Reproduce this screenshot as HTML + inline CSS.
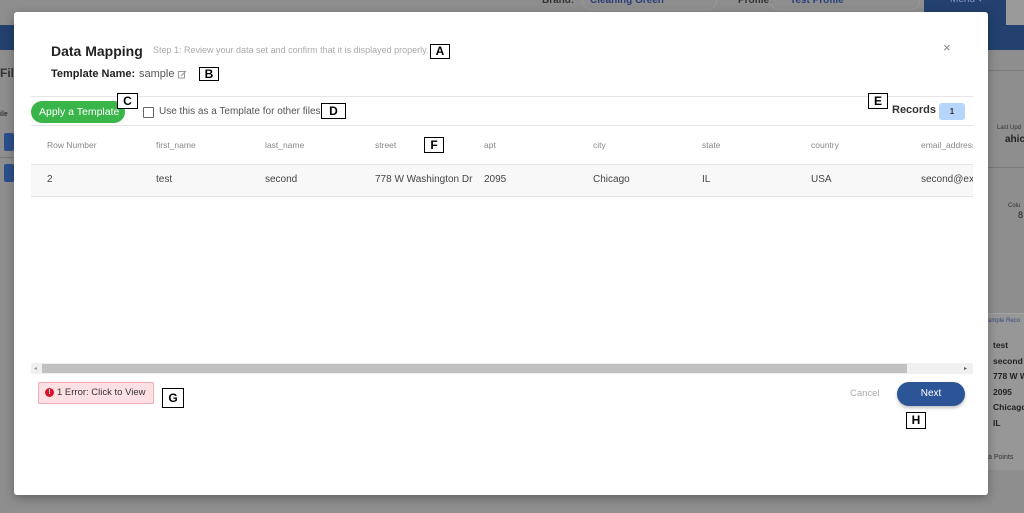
<!DOCTYPE html>
<html><head><style>
*{margin:0;padding:0;box-sizing:border-box}
body{width:1024px;height:513px;overflow:hidden;background:#8e8e8e;font-family:"Liberation Sans",Arial,sans-serif;position:relative}
.a{position:absolute;white-space:nowrap}
.box{position:absolute;border:1px solid #000;background:#fff;font:bold 12px "Liberation Sans",sans-serif;text-align:center;color:#000}
.th{position:absolute;top:140px;font-size:8.5px;color:#888}
.td{position:absolute;top:174px;font-size:10px;color:#444}
</style></head><body>
<div class="a" style="left:0;top:25px;width:14px;height:25px;background:#23406e"></div>
<div class="a" style="left:924px;top:0;width:100px;height:50px;background:#23406e"></div>
<div class="a" style="left:1006px;top:0;width:18px;height:25px;background:#9a9a9a"></div>
<div class="a" style="left:950px;top:-6px;font-size:10px;color:#8a9ac0">Menu ▾</div>
<div class="a" style="left:542px;top:-5px;font-size:10px;font-weight:bold;color:#333">Brand:</div>
<div class="a" style="left:582px;top:-8px;width:135px;height:18px;border:1px solid #999;border-radius:9px"></div>
<div class="a" style="left:590px;top:-5px;font-size:10px;color:#2c3f7a;font-weight:bold">Cleaning Green</div>
<div class="a" style="left:738px;top:-5px;font-size:10px;font-weight:bold;color:#333">Profile:</div>
<div class="a" style="left:770px;top:-8px;width:150px;height:18px;border:1px solid #999;border-radius:9px"></div>
<div class="a" style="left:790px;top:-5px;font-size:10px;color:#2c3f7a;font-weight:bold">Test Profile</div>
<div class="a" style="left:0;top:66px;font-size:12px;font-weight:bold;color:#333">File</div>
<div class="a" style="left:0;top:111px;font-size:7px;font-weight:bold;color:#333">ile</div>
<div class="a" style="left:4px;top:133px;width:10px;height:18px;background:#2c4f8c;border-radius:2px"></div>
<div class="a" style="left:4px;top:164px;width:10px;height:18px;background:#2c4f8c;border-radius:2px"></div>
<div class="a" style="left:0;top:157px;width:14px;height:1px;background:#7a7a7a"></div>
<div class="a" style="left:988px;top:70px;width:36px;height:1px;background:#7a7a7a"></div>
<div class="a" style="left:988px;top:167px;width:36px;height:1px;background:#7a7a7a"></div>
<div class="a" style="left:997px;top:125px;font-size:6px;color:#333">Last Upd</div>
<div class="a" style="left:1005px;top:134px;font-size:10px;font-weight:bold;color:#222">ahic</div>
<div class="a" style="left:1008px;top:203px;font-size:6px;color:#333">Colu</div>
<div class="a" style="left:1018px;top:210px;font-size:9px;color:#222">8</div>
<div class="a" style="left:988px;top:313px;width:36px;height:157px;background:#979797;border-top:1px solid #a5a5a5"></div>
<div class="a" style="left:988px;top:318px;font-size:6px;color:#3a4a7a">ample Reco</div>
<div class="a" style="left:993px;top:338px;font-size:8.5px;font-weight:bold;color:#222;line-height:15.6px">test<br>second<br>778 W W<br>2095<br>Chicago<br>IL</div>
<div class="a" style="left:988px;top:454px;font-size:7px;color:#333">a Points</div>
<div class="a" style="left:14px;top:12px;width:974px;height:483px;background:#fff;border-radius:3px;box-shadow:0 3px 10px rgba(0,0,0,.3)"></div>
<div class="a" style="left:51px;top:43px;font-size:14px;font-weight:bold;color:#222">Data Mapping</div>
<div class="a" style="left:153px;top:45px;font-size:9px;color:#aaa">Step 1: Review your data set and confirm that it is displayed properly.</div>
<div class="box" style="left:430px;top:44px;width:20px;height:15px;line-height:13px">A</div>
<div class="a" style="left:943px;top:40px;font-size:13px;color:#888">×</div>
<div class="a" style="left:51px;top:68px;font-size:11px;font-weight:bold;color:#222">Template Name:</div>
<div class="a" style="left:139px;top:68px;font-size:11px;color:#555">sample</div>
<svg class="a" style="left:178px;top:70px" width="9" height="9" viewBox="0 0 9 9"><rect x="0.5" y="1.5" width="6" height="6.5" fill="none" stroke="#999"/><path d="M3 6 L8 1" stroke="#999" stroke-width="1.2"/></svg>
<div class="box" style="left:199px;top:67px;width:20px;height:14px;line-height:12px">B</div>
<div class="a" style="left:31px;top:96px;width:942px;height:1px;background:#e6e6e6"></div>
<div class="a" style="left:31px;top:101px;width:94px;height:22px;background:#3ab54a;border-radius:11px;color:#fff;font-size:10.5px;line-height:22px;padding-left:8px">Apply a Template</div>
<div class="box" style="left:117px;top:93px;width:21px;height:16px;line-height:14px">C</div>
<div class="a" style="left:143px;top:107px;width:11px;height:11px;border:1px solid #666;border-radius:1px"></div>
<div class="a" style="left:159px;top:106px;font-size:10px;color:#555">Use this as a Template for other files?</div>
<div class="box" style="left:321px;top:103px;width:25px;height:16px;line-height:14px">D</div>
<div class="box" style="left:868px;top:93px;width:20px;height:16px;line-height:14px">E</div>
<div class="a" style="left:892px;top:104px;font-size:11px;font-weight:bold;color:#333">Records</div>
<div class="a" style="left:939px;top:103px;width:26px;height:17px;background:#b5d5fb;border-radius:3px;font-size:8px;font-weight:bold;color:#333;text-align:center;line-height:17px">1</div>
<div class="a" style="left:31px;top:125px;width:942px;height:1px;background:#e6e6e6"></div>
<div class="th" style="left:47px">Row Number</div>
<div class="th" style="left:156px">first_name</div>
<div class="th" style="left:265px">last_name</div>
<div class="th" style="left:375px">street</div>
<div class="th" style="left:484px">apt</div>
<div class="th" style="left:593px">city</div>
<div class="th" style="left:702px">state</div>
<div class="th" style="left:811px">country</div>
<div class="th" style="left:921px;width:52px;overflow:hidden">email_address</div>
<div class="box" style="left:424px;top:137px;width:20px;height:16px;line-height:14px">F</div>
<div class="a" style="left:31px;top:164px;width:942px;height:33px;background:#f8f8f8;border-top:1px solid #e4e4e4;border-bottom:1px solid #e4e4e4"></div>
<div class="td" style="left:47px">2</div>
<div class="td" style="left:156px">test</div>
<div class="td" style="left:265px">second</div>
<div class="td" style="left:375px">778 W Washington Dr</div>
<div class="td" style="left:484px">2095</div>
<div class="td" style="left:593px">Chicago</div>
<div class="td" style="left:702px">IL</div>
<div class="td" style="left:811px">USA</div>
<div class="td" style="left:921px;width:52px;overflow:hidden">second@example.com</div>
<div class="a" style="left:31px;top:363px;width:942px;height:11px;background:#f0f0f0"></div>
<div class="a" style="left:42px;top:364px;width:865px;height:9px;background:#c1c1c1"></div>
<div class="a" style="left:34px;top:365px;font-size:6px;color:#999">◂</div>
<div class="a" style="left:964px;top:365px;font-size:6px;color:#555">▸</div>
<div class="a" style="left:38px;top:382px;width:116px;height:22px;background:#fde0e3;border:1px solid #f5aab3;border-radius:2px"></div>
<div class="a" style="left:45px;top:388px;width:9px;height:9px;border-radius:50%;background:#d9142b;color:#fff;font-size:7px;font-weight:bold;text-align:center;line-height:9px">!</div>
<div class="a" style="left:57px;top:387px;font-size:9.5px;color:#333">1 Error: Click to View</div>
<div class="box" style="left:162px;top:388px;width:22px;height:20px;line-height:18px">G</div>
<div class="a" style="left:850px;top:388px;font-size:9.5px;color:#aaa">Cancel</div>
<div class="a" style="left:897px;top:382px;width:68px;height:24px;background:#2c5597;border-radius:12px;color:#fff;font-size:10px;text-align:center;line-height:24px;box-shadow:0 2px 3px rgba(0,0,0,.25)">Next</div>
<div class="box" style="left:906px;top:412px;width:20px;height:17px;line-height:15px">H</div>
</body></html>
